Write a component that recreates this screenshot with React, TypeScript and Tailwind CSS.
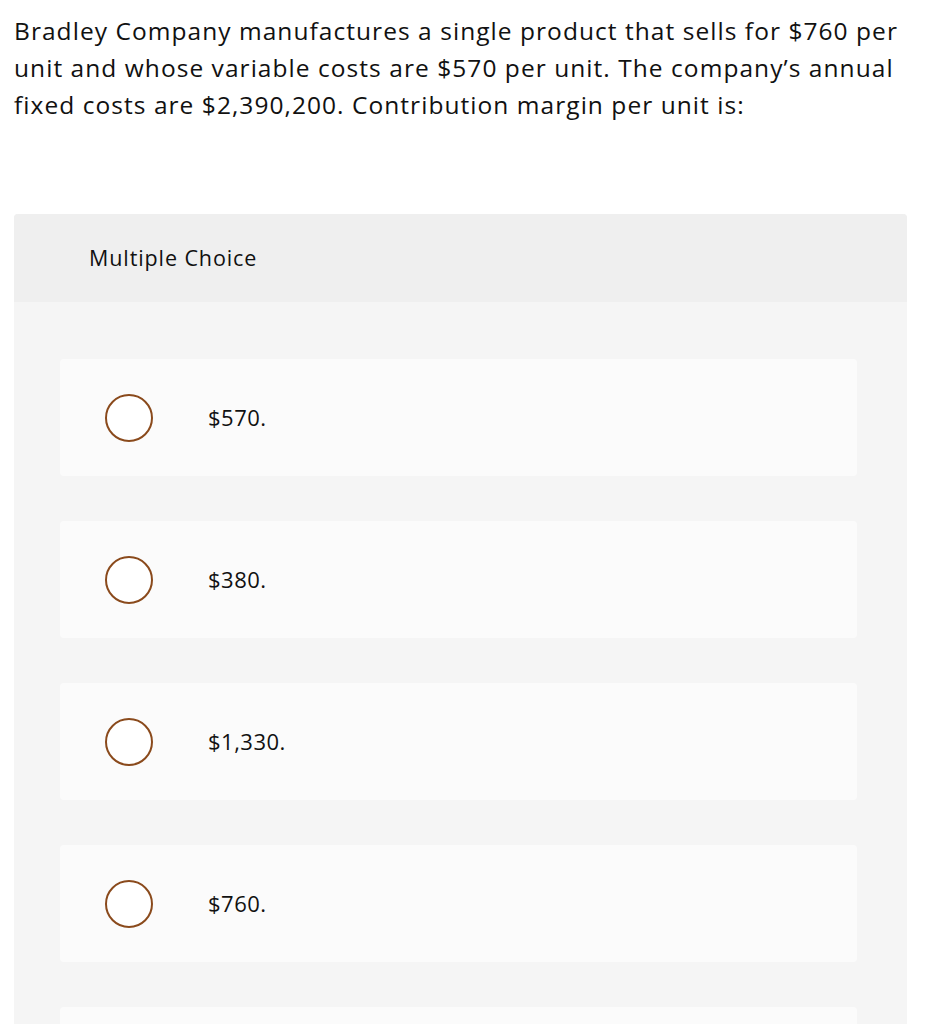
import React from "react";

const options = ["$570.", "$380.", "$1,330.", "$760.", ""];

export default function App() {
  return (
    <div
      className="w-[949px] h-[1024px] overflow-hidden bg-white text-[#111111]"
      style={{ fontFamily: "'Open Sans', sans-serif" }}
    >
      <p className="whitespace-nowrap pl-[14px] pt-[12px] text-[24.5px] leading-[37px] tracking-[1.05px]">
        Bradley Company manufactures a single product that sells for $760 per
        <br />
        unit and whose variable costs are $570 per unit. The company’s annual
        <br />
        fixed costs are $2,390,200. Contribution margin per unit is:
      </p>
      <div className="ml-[14px] mt-[91px] w-[893px] rounded-t-[4px] bg-[#f5f5f5]">
        <div className="flex h-[88px] items-center rounded-t-[4px] bg-[#efefef] pl-[75px] text-[21.5px] tracking-[0.9px]">
          Multiple Choice
        </div>
        <div className="flex flex-col gap-[45px] pl-[46px] pr-[50px] pt-[57px]">
          {options.map((o, i) => (
            <div
              key={i}
              className="flex h-[117px] items-center rounded-[4px] bg-[#fbfbfb] pl-[45px]"
            >
              <div className="h-[48px] w-[48px] shrink-0 rounded-full border-[2px] border-[#8a4a1c] bg-white" />
              <span className="ml-[55px] text-[22px] tracking-[0.5px]">{o}</span>
            </div>
          ))}
        </div>
      </div>
    </div>
  );
}
